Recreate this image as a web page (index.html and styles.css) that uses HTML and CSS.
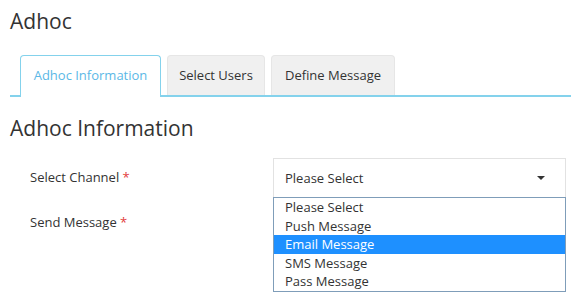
FILE: index.html
```html
<!DOCTYPE html>
<html>
<head>
<meta charset="utf-8">
<link rel="stylesheet" href="styles.css">
</head>
<body>
<div class="page">
  <h1 class="title">Adhoc</h1>
  <ul class="tabs">
    <li class="tab active">Adhoc Information</li>
    <li class="tab">Select Users</li>
    <li class="tab">Define Message</li>
  </ul>
  <h2 class="section">Adhoc Information</h2>
  <div class="form">
    <div class="row">
      <label class="label">Select Channel <span class="req">*</span></label>
      <div class="field">
        <div class="select">
          <span>Please Select</span>
          <span class="caret"></span>
        </div>
        <ul class="options">
          <li class="option">Please Select</li>
          <li class="option">Push Message</li>
          <li class="option selected">Email Message</li>
          <li class="option">SMS Message</li>
          <li class="option">Pass Message</li>
        </ul>
      </div>
    </div>
    <div class="row">
      <label class="label">Send Message <span class="req">*</span></label>
      <div class="field"></div>
    </div>
  </div>
</div>
</body>
</html>
```

FILE: styles.css
```css
* { box-sizing: border-box; }
html, body { margin: 0; padding: 0; background: #fff; }
body {
  font-family: "Open Sans", "Noto Sans", sans-serif;
  color: #333;
  font-size: 13px;
  min-height: 297px;
}
.page { padding: 0 0 0 10px; min-height: 297px; }
.title {
  margin: 0;
  padding-top: 7px;
  height: 55px;
  font-size: 21px;
  font-weight: 400;
  line-height: 28px;
  color: #333;
}
.tabs {
  list-style: none;
  margin: 0;
  padding: 0 0 0 10px;
  display: flex;
  gap: 6px;
  border-bottom: 2px solid #84d2ec;
  height: 42px;
}
.tab {
  height: 40px;
  padding: 0 0 1px;
  display: flex;
  align-items: center;
  justify-content: center;
  white-space: nowrap;
  background: #f0f0f0;
  border: 1px solid #e6e6e6;
  border-bottom: none;
  border-radius: 4px 4px 0 0;
  color: #333;
  font-size: 13px;
}
.tab:nth-child(1) { width: 141px; }
.tab:nth-child(2) { width: 98px; }
.tab:nth-child(3) { width: 124px; }
.tab.active {
  background: #fff;
  border: 1px solid #84d2ec;
  border-bottom: none;
  color: #5bb8e6;
  height: 42px;
  padding-bottom: 3px;
  margin-bottom: -2px;
}
.section {
  margin: 0;
  padding-top: 17px;
  height: 61px;
  font-size: 21px;
  font-weight: 400;
  line-height: 28px;
  color: #333;
}
.form { padding-left: 20px; }
.row {
  display: flex;
  align-items: center;
  height: 40px;
  margin-bottom: 5px;
}
.label {
  width: 243px;
  font-size: 13px;
  color: #333;
  padding-bottom: 2px;
}
.req { color: #e23b3b; }
.field {
  position: relative;
  width: 293px;
  height: 40px;
}
.select {
  height: 40px;
  border: 1px solid #e2e2e2;
  display: flex;
  align-items: center;
  justify-content: space-between;
  padding: 0 20px 0 11px;
  font-size: 13px;
  color: #333;
}
.caret {
  width: 0; height: 0;
  border-left: 4px solid transparent;
  border-right: 4px solid transparent;
  border-top: 4px solid #333;
}
.options {
  position: absolute;
  left: 0;
  top: 39px;
  width: 293px;
  margin: 0;
  padding: 0;
  list-style: none;
  background: #fff;
  border: 1px solid #7f9db9;
  z-index: 2;
}
.option {
  height: 18.6px;
  line-height: 18.6px;
  padding-left: 11px;
  font-size: 13px;
  color: #333;
}
.option.selected { background: #1e90ff; color: #fff; }
```
